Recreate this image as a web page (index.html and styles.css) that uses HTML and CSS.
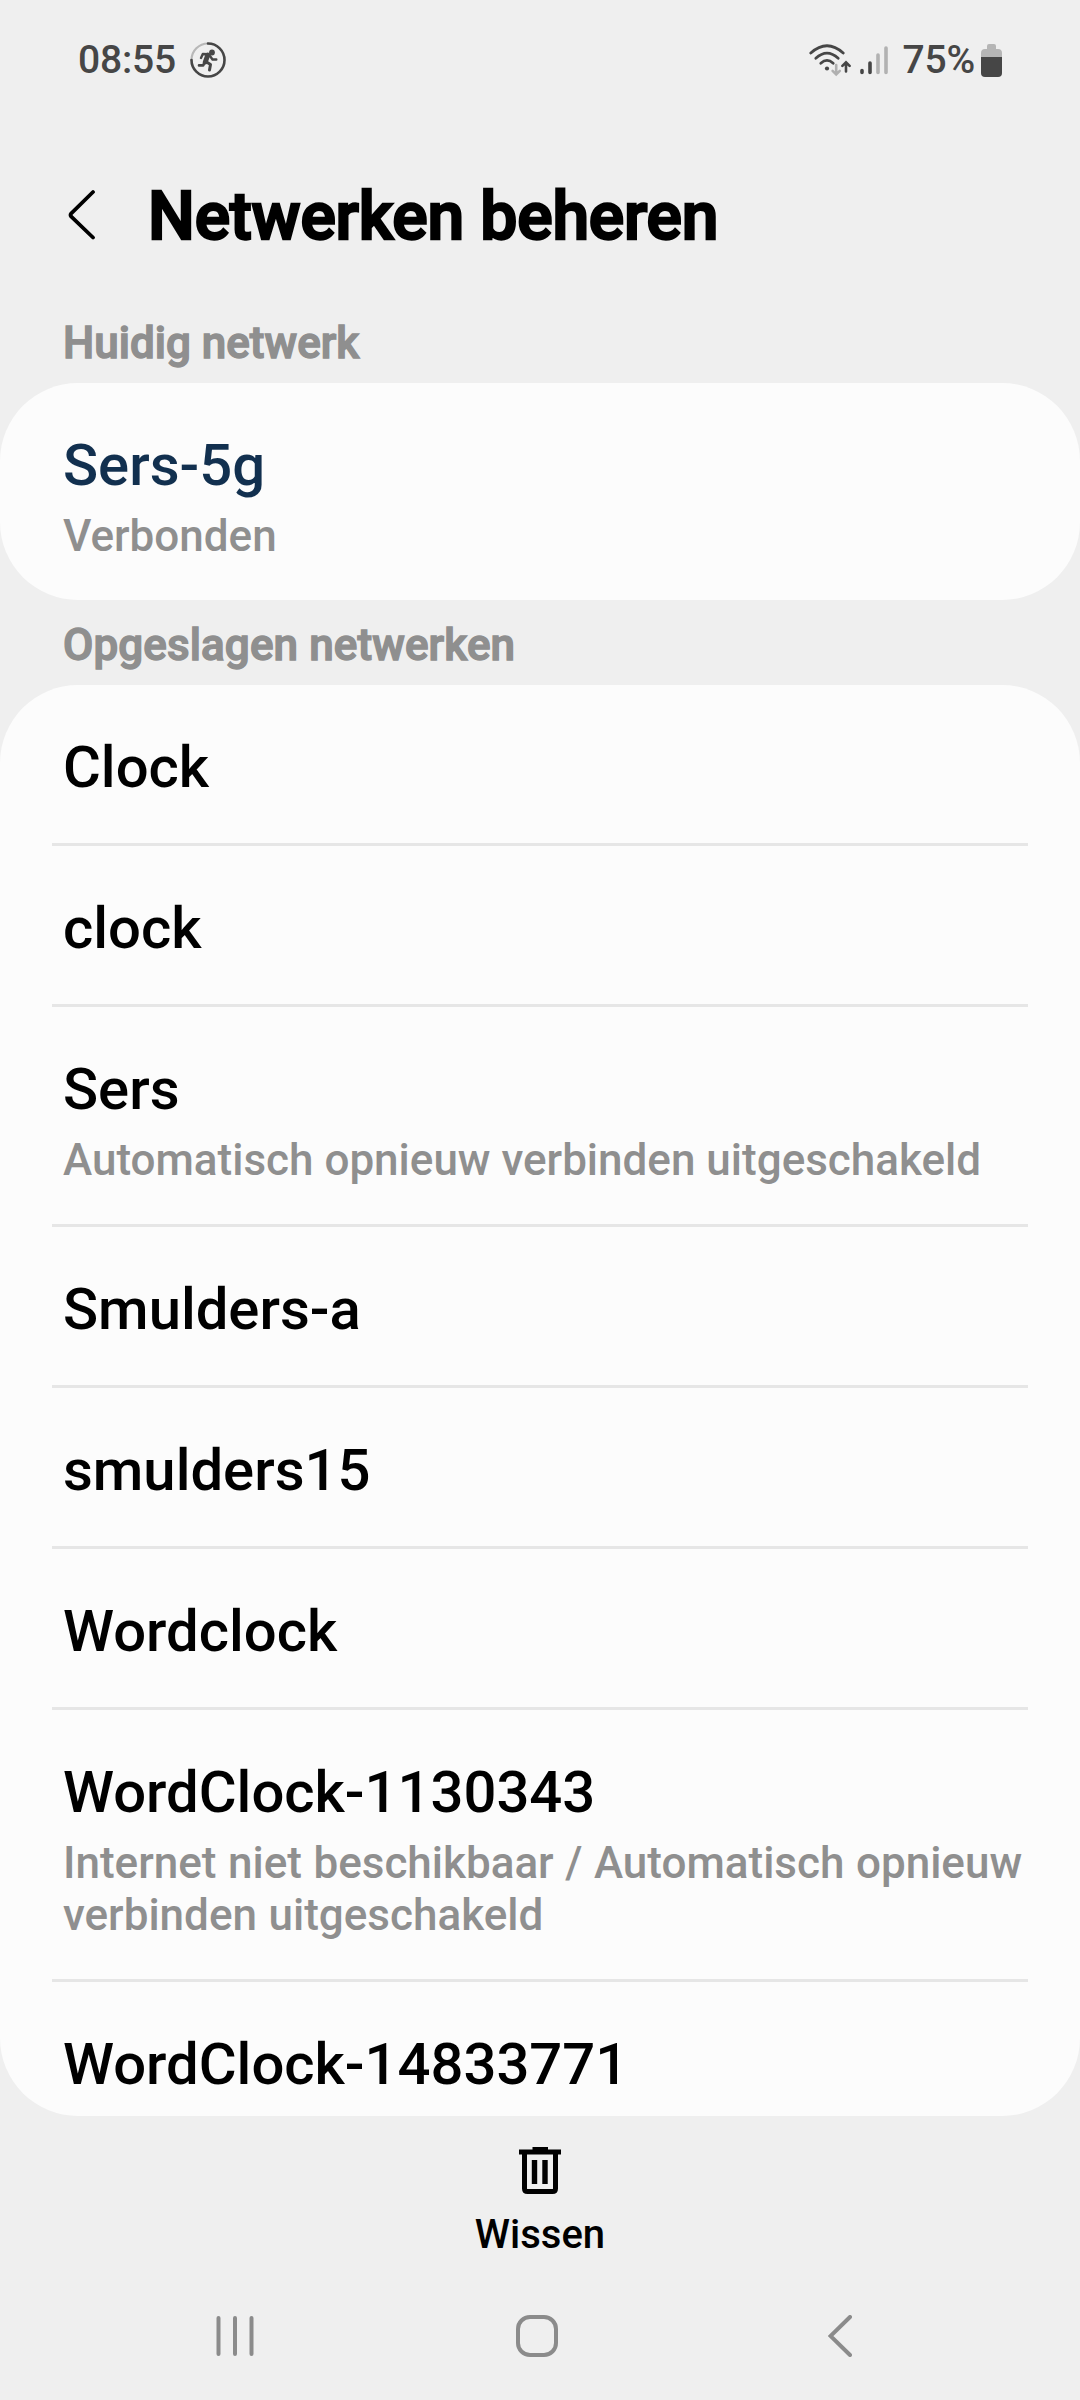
FILE: index.html
```
<!DOCTYPE html>
<html lang="nl">
<head>
<meta charset="utf-8">
<title>Netwerken beheren</title>
<link rel="stylesheet" href="styles.css">
</head>
<body>
<div class="screen">
  <div class="status">
    <span class="clock">08:55</span>
    <svg class="run" width="36" height="36" viewBox="0 0 36 36" fill="none" stroke="#464646" stroke-linecap="round" stroke-linejoin="round">
      <path d="M1.5 18A16.5 16.5 0 0 1 18 1.5" stroke="#b8b8b8" stroke-width="2.2"/>
      <path d="M18 1.5A16.5 16.5 0 1 1 1.5 18" stroke-width="2.6"/>
      <circle cx="22" cy="10.5" r="2.9" fill="#464646" stroke="none"/>
      <path d="M17.8 13L15.3 20" stroke-width="5"/>
      <path d="M17.5 12.2L12.8 12L11 16" stroke-width="2.4"/>
      <path d="M20 14L22.5 17.5H26.3" stroke-width="2.4"/>
      <path d="M16.5 20L20.5 22.5L19.5 28" stroke-width="3"/>
      <path d="M14.5 20.5L13.2 23.4H9" stroke-width="2.6"/>
    </svg>
    <span class="space"></span>
    <svg class="wifi" width="42" height="34" viewBox="0 0 42 34" fill="none" stroke="#464646" stroke-width="2.8" stroke-linecap="round">
      <path d="M1.8 10Q18 -4.500 34.200 10"/>
      <path d="M6.800 15.200Q18 5 29.200 15.200"/>
      <path d="M11.800 20.200Q18 14.500 24.200 20.200"/>
      <circle cx="18" cy="25.500" r="2.100" fill="#464646" stroke="none"/>
      <path d="M27.200 22V31M23.600 27.800L27.200 31.400L30.800 27.800" stroke="#b0b0b0" stroke-width="2.600"/>
      <path d="M37 28.500V19.500M33.400 22.900L37 19.300L40.600 22.900" stroke-width="2.600"/>
    </svg>
    <svg class="signal" width="28" height="30" viewBox="0 0 28 30" stroke-width="3.600" stroke-linecap="round">
      <path d="M2 25.500V27.500M10 18V27.500" stroke="#464646"/>
      <path d="M18 10V27.500M26 3V27.500" stroke="#b2b2b2"/>
    </svg>
    <span class="percent">75%</span>
    <svg class="battery" width="21" height="33" viewBox="0 0 21 33">
      <path d="M6 5V2Q6 0 8 0H13Q15 0 15 2V5H17Q21 5 21 9V13H0V9Q0 5 4 5Z" fill="#b5b5b5"/>
      <path d="M0 13H21V29Q21 33 17 33H4Q0 33 0 29Z" fill="#464646"/>
    </svg>
  </div>

  <header class="bar">
    <svg class="back" width="28" height="52" viewBox="0 0 28 52" fill="none" stroke="#000" stroke-width="3.800" stroke-linecap="round" stroke-linejoin="round">
      <path d="M25 3L3.300 24.300Q1.800 26 3.300 27.700L25 48.500"/>
    </svg>
    <h1 class="title">Netwerken beheren</h1>
  </header>

  <h2 class="section first">Huidig netwerk</h2>
  <div class="card current">
    <div class="row"><div class="name active">Sers-5g</div><div class="sub">Verbonden</div></div>
  </div>
  <h2 class="section">Opgeslagen netwerken</h2>
  <div class="card saved">
    <div class="row"><div class="name">Clock</div></div>
    <div class="row"><div class="name">clock</div></div>
    <div class="row"><div class="name">Sers</div><div class="sub">Automatisch opnieuw verbinden uitgeschakeld</div></div>
    <div class="row"><div class="name">Smulders-a</div></div>
    <div class="row"><div class="name">smulders15</div></div>
    <div class="row"><div class="name">Wordclock</div></div>
    <div class="row"><div class="name">WordClock-1130343</div><div class="sub long">Internet niet beschikbaar / Automatisch opnieuw verbinden uitgeschakeld</div></div>
    <div class="row"><div class="name">WordClock-14833771</div></div>
  </div>

  <div class="action">
    <svg width="42" height="47" viewBox="0 0 42 47" fill="none" stroke="#000" stroke-width="5">
      <path d="M0 5H42M13.500 2.500H29" />
      <path d="M5.500 5V41.500Q5.500 44.500 8.500 44.500H33.500Q36.500 44.500 36.500 41.500V5"/>
      <path d="M15.500 13V37M26 13V37" stroke-width="5.400"/>
    </svg>
    <span class="label">Wissen</span>
  </div>

  <nav class="nav">
    <svg width="38" height="42" viewBox="0 0 38 42" stroke="#8b8b8b" stroke-width="4" stroke-linecap="round"><path d="M2.500 3V39M19 3V39M35.500 3V39"/></svg>
    <svg class="home" width="42" height="42" viewBox="0 0 42 42" fill="none" stroke="#8b8b8b" stroke-width="4"><rect x="2" y="2" width="38" height="38" rx="12"/></svg>
    <svg width="25" height="42" viewBox="0 0 25 42" fill="none" stroke="#8b8b8b" stroke-width="4" stroke-linecap="round"><path d="M22 2L2.500 21L22 40"/></svg>
  </nav>
</div>
</body>
</html>
```
FILE: styles.css
```
* { box-sizing: border-box; }
body { margin: 0; background: #efefef; font-family: Roboto, sans-serif; font-weight: 500; color: #000; }
.screen { width: 1080px; height: 2400px; display: flex; flex-direction: column; overflow: hidden; }
.status { height: 120px; padding: 0 78px; display: flex; align-items: center; color: #464646; }
.clock, .percent { font-size: 39px; line-height: 48px; font-weight: 500; letter-spacing: -0.200px; }
.run { margin-left: 14px; }
.space { flex: 1; }
.signal { margin-left: 9px; }
.percent { margin-left: 15px; }
.battery { margin-left: 6px; }
.bar { height: 190px; padding: 0 68px; display: flex; align-items: center; }
.title { margin: 3px 0 0 52px; font-size: 66px; line-height: 80px; font-weight: 500; letter-spacing: -0.180px; -webkit-text-stroke: 2.400px #000; white-space: nowrap; }
.section { margin: 0; height: 85px; padding: 19px 63px 0; font-size: 44px; line-height: 52px; font-weight: 500; letter-spacing: 0.100px; color: #8f8f8f; -webkit-text-stroke: 1.400px #8f8f8f; white-space: nowrap; }
.section.first { height: 73px; padding-top: 7px; letter-spacing: 0; }
.card { background: #fcfcfc; border-radius: 78px; overflow: hidden; flex: none; }
.current { height: 217px; }
.saved { height: 1431px; }
.row { margin: 0 52px; padding: 49px 0 43px 11px; border-bottom: 3px solid #e6e6e6; }
.current .row, .row:last-child { border-bottom: 0; }
.name { font-size: 58px; line-height: 66px; white-space: nowrap; }
.active { color: #12304f; }
.sub { margin: 12px -5px -5px 0; font-size: 44px; line-height: 52px; color: #8f8f8f; }
.long { word-spacing: 0.600px; }
.action { height: 164px; padding-top: 31px; display: flex; flex-direction: column; align-items: center; }
.label { margin-top: 17px; font-size: 40px; line-height: 48px; }
.nav { height: 112px; padding: 0 227px 0 216px; display: flex; justify-content: space-between; align-items: center; }
.home { margin-right: 8px; }
```
